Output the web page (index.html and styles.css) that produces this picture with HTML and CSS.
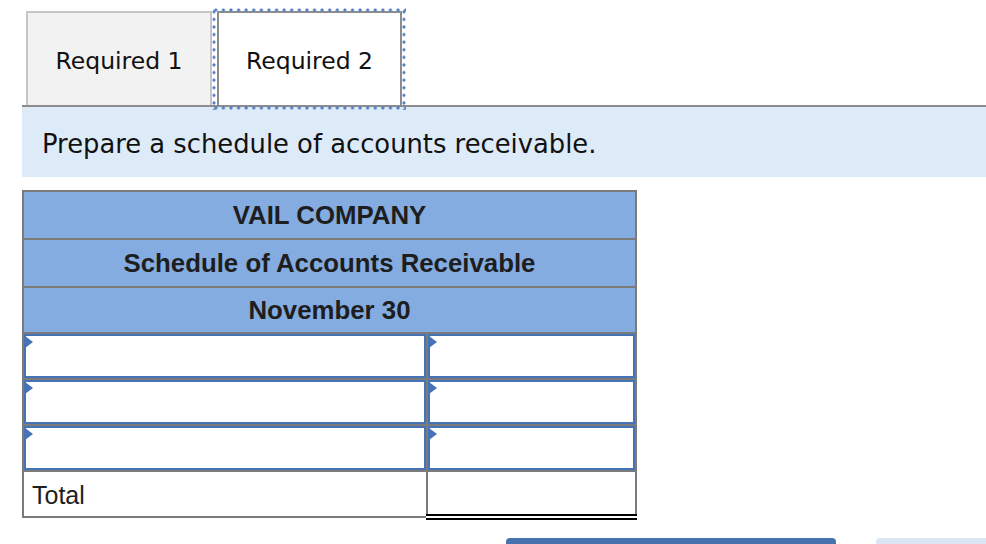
FILE: index.html
```html
<!DOCTYPE html>
<html>
<head>
<meta charset="utf-8">
<link rel="stylesheet" href="styles.css">
</head>
<body>
<div class="page">
  <div class="tabs">
    <div class="tab tab-inactive">Required 1</div>
    <div class="tab tab-active">Required 2</div>
  </div>
  <div class="prompt">Prepare a schedule of accounts receivable.</div>
  <table class="sheet">
    <colgroup><col class="col-name"><col class="col-amt"></colgroup>
    <tr><th colspan="2" class="hdr">VAIL COMPANY</th></tr>
    <tr><th colspan="2" class="hdr">Schedule of Accounts Receivable</th></tr>
    <tr><th colspan="2" class="hdr hdr-last">November 30</th></tr>
    <tr class="data"><td><div class="inp"></div></td><td><div class="inp"></div></td></tr>
    <tr class="data"><td><div class="inp"></div></td><td><div class="inp"></div></td></tr>
    <tr class="data"><td><div class="inp"></div></td><td><div class="inp"></div></td></tr>
    <tr class="total"><td class="total-label">Total</td><td class="total-amt"></td></tr>
  </table>
  <div class="buttons">
    <div class="btn btn-primary"></div>
    <div class="btn btn-light"></div>
  </div>
</div>
</body>
</html>
```
FILE: styles.css
```css
html, body {
  margin: 0;
  padding: 0;
  background: #ffffff;
}
.page {
  padding-left: 22px;
  padding-top: 11px;
}
.tabs {
  display: flex;
  padding-left: 4px;
  border-bottom: 2px solid #8c8c8c;
  height: 94px;
}
.tab {
  box-sizing: border-box;
  height: 94px;
  display: flex;
  align-items: center;
  justify-content: center;
  padding-top: 4px;
  font-family: "DejaVu Sans", Verdana, sans-serif;
  font-size: 23.5px;
  color: #111;
}
.tab-inactive {
  width: 186px;
  background: #f2f2f2;
  border: 2px solid #c6c6c6;
  border-bottom: none;
}
.tab-active {
  position: relative;
  width: 185px;
  margin-left: 5px;
  background: #ffffff;
  border: 2px solid #8c8c8c;
  border-bottom: none;
}
.tab-active::after {
  content: "";
  position: absolute;
  left: -7px;
  right: -6px;
  top: -5px;
  bottom: -5px;
  background:
    radial-gradient(circle, #4f7fc6 1.3px, transparent 1.8px) 0 0 / 7.6px 4px repeat-x,
    radial-gradient(circle, #4f7fc6 1.3px, transparent 1.8px) 0 100% / 7.6px 4px repeat-x,
    radial-gradient(circle, #4f7fc6 1.3px, transparent 1.8px) 0 0 / 4px 7.6px repeat-y,
    radial-gradient(circle, #4f7fc6 1.3px, transparent 1.8px) 100% 0 / 4px 7.6px repeat-y;
  pointer-events: none;
}
.prompt {
  background: #ddeaf7;
  height: 70px;
  display: flex;
  align-items: center;
  padding-left: 20px;
  padding-top: 3px;
  box-sizing: border-box;
  font-family: "DejaVu Sans", Verdana, sans-serif;
  font-size: 25.8px;
  color: #111;
}
.sheet {
  margin-top: 13px;
  width: 615px;
  table-layout: fixed;
  border-collapse: collapse;
  font-family: "Liberation Sans", Arial, sans-serif;
  color: #1e1e1e;
}
.col-name {
  width: 404px;
}
.sheet th, .sheet td {
  border: 2px solid #7b7b7b;
  padding: 0;
}
.hdr {
  background: #84ace0;
  height: 46px;
  font-size: 25.8px;
  font-weight: bold;
  text-align: center;
  vertical-align: middle;
}
.sheet .hdr-last {
  height: 44px;
}
.data td {
  height: 44px;
  vertical-align: top;
}
.inp {
  position: relative;
  box-sizing: border-box;
  height: 44px;
  border: 2px solid #4573b5;
  background: #fff;
}
.inp::before {
  content: "";
  position: absolute;
  left: -1px;
  top: 0;
  border-left: 8px solid #4573b5;
  border-top: 6px solid transparent;
  border-bottom: 6px solid transparent;
}
.total td {
  height: 42px;
}
.sheet td.total-label {
  font-size: 25px;
  padding-left: 8px;
  padding-top: 2px;
  vertical-align: middle;
}
.sheet td.total-amt {
  border-top: 2px solid #000;
  border-bottom: 6px double #000;
}
.buttons {
  display: flex;
  margin-top: 18px;
  padding-left: 484px;
}
.btn {
  flex-shrink: 0;
  height: 30px;
  border-radius: 4px;
}
.btn-primary {
  width: 330px;
  background: #4672b0;
}
.btn-light {
  width: 120px;
  margin-left: 40px;
  background: #dce6f2;
}
```
